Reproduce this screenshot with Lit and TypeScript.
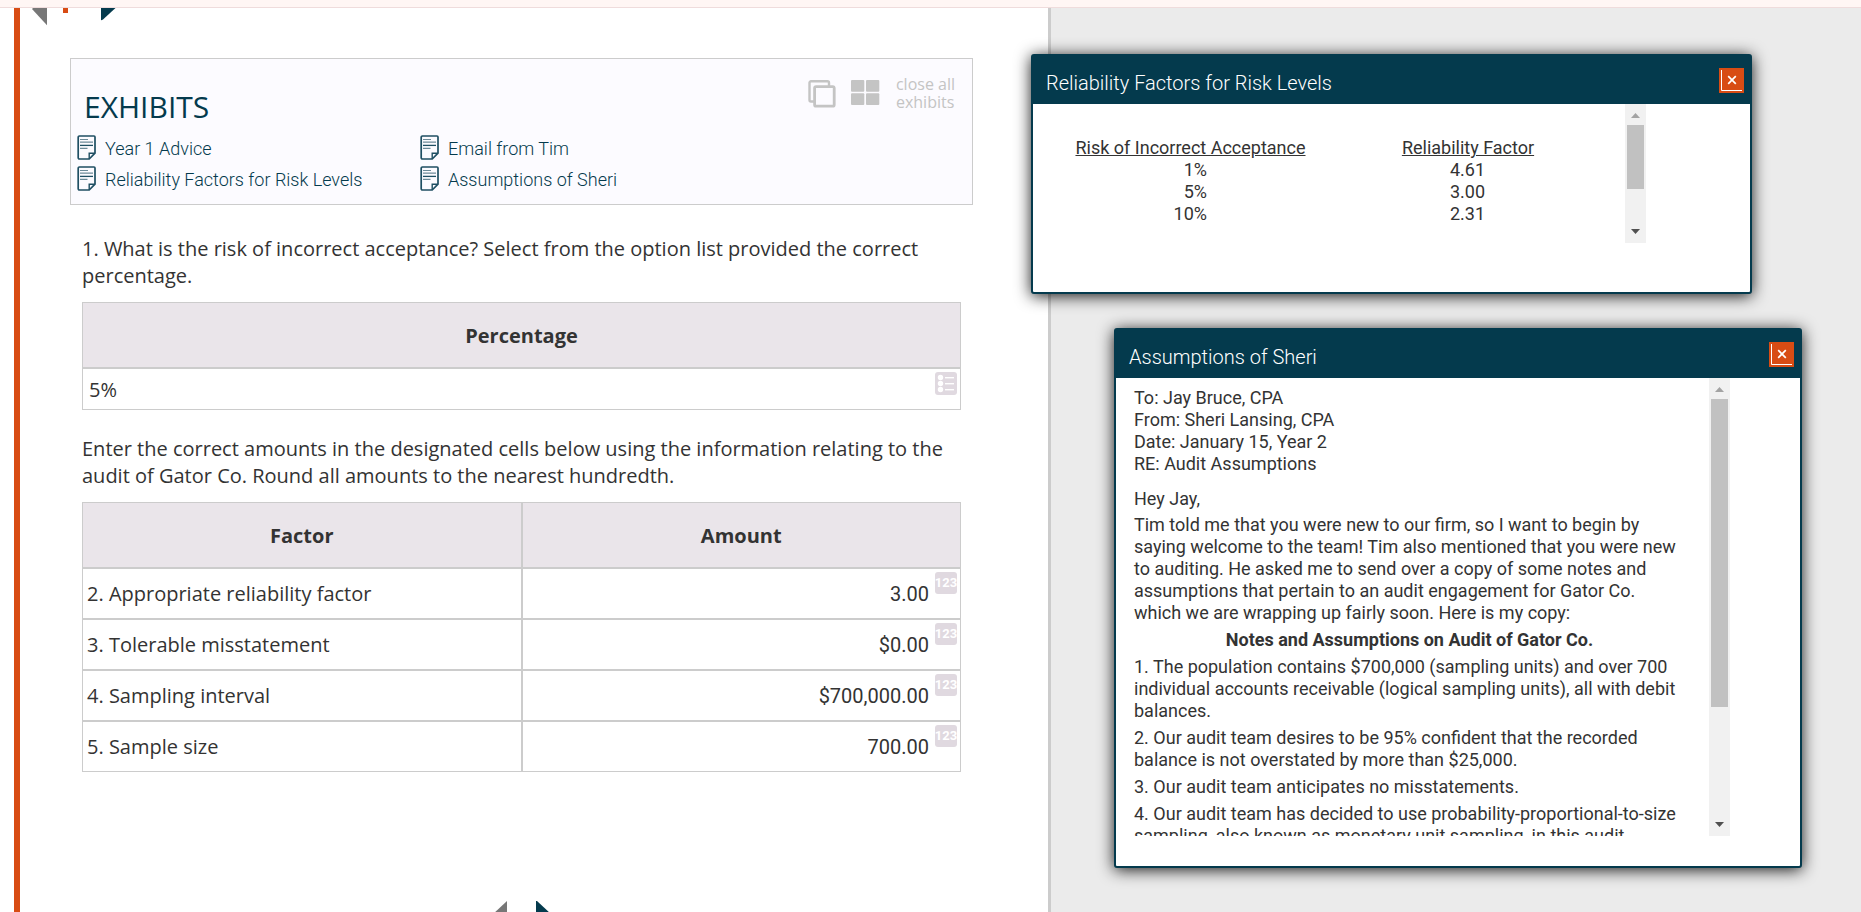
import { LitElement, html, css, svg } from "lit";
import { customElement, property } from "lit/decorators.js";

const docIcon = svg`<svg class="doc" width="20" height="25" viewBox="0 0 20 25" fill="none" aria-hidden="true">
  <path d="M2.4 1H17a1 1 0 0 1 1 1V18.2L12.2 24H2.4A1.2 1.2 0 0 1 1.2 22.8V2.2A1.2 1.2 0 0 1 2.4 1Z" stroke="#1f4f63" stroke-width="1.7"/>
  <path d="M12.2 24V18.2H18" stroke="#1f4f63" stroke-width="1.4"/>
  <path d="M3 4.5H11M3 7.2H16M3 13.4H10.5" stroke="#6d8b99" stroke-width="1.2"/>
  <path d="M3 10.4H16" stroke="#1f4f63" stroke-width="1.3"/>
</svg>`;

@customElement("exhibit-window")
export class ExhibitWindow extends LitElement {
  @property() heading = "";

  static styles = css`
    :host {
      box-sizing: border-box;
      display: flex;
      flex-direction: column;
      border: 2px solid #043a4d;
      border-radius: 3px;
      background: #fff;
      box-shadow: 0 2px 16px rgba(0, 0, 0, 0.9);
      font-family: Roboto, sans-serif;
    }
    .bar {
      display: flex;
      align-items: center;
      justify-content: space-between;
      height: 48px;
      padding: 0 6px 0 13px;
      background: #043a4d;
    }
    .title {
      margin: 0;
      padding-top: 6px;
      color: #fff;
      font-size: 20px;
      line-height: 24px;
      font-weight: 300;
    }
    .close {
      box-sizing: border-box;
      width: 25px;
      height: 25px;
      margin: 0 0 0 12px;
      padding: 0;
      border: 0;
      background: #d84c14;
    }
    .close svg {
      display: block;
    }
    .body {
      display: flex;
      flex: 1;
      min-height: 0;
    }
    .content {
      flex: 1;
      min-width: 0;
      overflow: hidden;
    }
  `;

  render() {
    return html`
      <header class="bar">
        <h2 class="title">${this.heading}</h2>
        <button class="close" aria-label="Close ${this.heading}">
          <svg width="25" height="25" viewBox="0 0 25 25" fill="none" stroke="#fff">
            <path d="M2.5 2V22.5H23" />
            <path d="M9.2 8.2L16.8 15.8M16.8 8.2L9.2 15.8" stroke-width="1.7" />
          </svg>
        </button>
      </header>
      <div class="body">
        <div class="content"><slot></slot></div>
        <slot name="scroll"></slot>
      </div>
    `;
  }
}

@customElement("scroll-rail")
export class ScrollRail extends LitElement {
  @property({ type: Number }) thumb = 50;

  static styles = css`
    :host {
      display: flex;
      flex-direction: column;
      flex: none;
      width: 21px;
      background: #f1f1f1;
    }
    .step {
      width: 21px;
      height: 21px;
      padding: 0;
      border: 0;
      background: transparent;
    }
    .step svg {
      display: block;
    }
    .track {
      flex: 1;
      padding: 0 2px;
    }
    .thumb {
      background: #c1c1c1;
    }
  `;

  render() {
    return html`
      <button class="step" aria-label="Scroll up">
        <svg width="21" height="21" viewBox="0 0 21 21"><path d="M6 14L10.5 9L15 14Z" fill="#a3a3a3" /></svg>
      </button>
      <div class="track"><div class="thumb" style="height:${this.thumb}%"></div></div>
      <button class="step" aria-label="Scroll down">
        <svg width="21" height="21" viewBox="0 0 21 21"><path d="M6 7L10.5 12L15 7Z" fill="#505050" /></svg>
      </button>
    `;
  }
}

@customElement("app-root")
export class AppRoot extends LitElement {
  static styles = css`
    :host {
      display: block;
      color: #333;
      font-family: "Open Sans", sans-serif;
      font-size: 20px;
      line-height: 27px;
    }
    .page {
      position: relative;
      display: flex;
      flex-direction: column;
      height: 100vh;
      overflow: hidden;
      background: #ebebeb;
    }
    .notice {
      flex: none;
      height: 7px;
      background: #fff6f4;
      border-bottom: 1px solid #efdcdc;
    }
    .split {
      display: grid;
      grid-template-columns: minmax(0, 1fr) 810px;
      flex: 1;
      min-height: 0;
    }
    .sheet {
      padding-left: 14px;
      background: #fff;
      border-right: 3px solid #ccc;
    }
    .inner {
      box-sizing: border-box;
      display: flex;
      flex-direction: column;
      height: 100%;
      padding: 0 75px 0 50px;
      border-left: 6px solid #d84c14;
    }
    .pager {
      display: flex;
      align-items: flex-start;
      height: 50px;
      margin-left: -38px;
    }
    .pager.foot {
      gap: 29px;
      height: 11px;
      margin: auto 0 0 422px;
    }
    .arrow {
      padding: 0;
      border: 0;
      background: transparent;
    }
    .arrow svg,
    .mark {
      display: block;
    }
    .mark {
      width: 5px;
      height: 5px;
      margin: 0 33px 0 16px;
      background: #d84c14;
    }
    .exhibits {
      box-sizing: border-box;
      height: 147px;
      padding: 0 7px 0 6px;
      background: #fcfbff;
      border: 1px solid #ccc;
    }
    .exhead {
      display: flex;
      justify-content: space-between;
      height: 76px;
      padding: 0 10px 0 7px;
    }
    .exhead h1 {
      margin: 28px 0 0;
      color: #043a4d;
      font-size: 30px;
      line-height: 40px;
      font-weight: 400;
    }
    .tools {
      display: flex;
      align-items: flex-start;
      padding-top: 16px;
    }
    .tool {
      padding: 0;
      border: 0;
      background: transparent;
      color: #c4c4c4;
      font: 400 16px/18px "Open Sans", sans-serif;
      text-align: left;
    }
    .tool svg {
      display: block;
      margin: 5px 15px 0 0;
    }
    .links {
      display: grid;
      grid-template-columns: 343px 1fr;
      row-gap: 6px;
      margin: 0;
      padding: 0;
      list-style: none;
    }
    .links a {
      display: flex;
      gap: 8px;
      height: 25px;
      color: #043a4d;
      font: 300 18px/27px Roboto, sans-serif;
      text-decoration: none;
    }
    .questions {
      padding: 30px 12px 0;
    }
    .ask {
      margin: 0 0 13px;
    }
    .grid {
      width: 100%;
      margin-bottom: 25px;
      border-collapse: separate;
      border-spacing: 0;
      border: 0;
      table-layout: fixed;
    }
    .grid th,
    .grid td {
      box-sizing: border-box;
      border: 1px solid #ccc;
    }
    .grid thead th {
      height: 66px;
      padding: 0;
      background: #eae5ea;
      font-weight: 700;
    }
    .grid tbody th {
      padding: 0 4px;
      font-weight: 400;
      text-align: left;
    }
    .grid tbody th,
    .amount {
      height: 51px;
    }
    .grid td {
      padding: 0;
    }
    .field {
      display: flex;
      align-items: stretch;
      padding: 0 3px 0 0;
      height: 49px;
    }
    .field.short {
      height: 40px;
    }
    .field input,
    .field select {
      flex: 1;
      min-width: 0;
      margin: 0;
      padding: 2px 6px 0;
      border: 0;
      background: transparent;
      color: #333;
      font: 400 20px/27px Roboto, sans-serif;
      text-align: right;
      appearance: none;
    }
    .field select {
      padding-top: 0;
      font-family: "Open Sans", sans-serif;
      text-align: left;
    }
    .field svg {
      flex: none;
      margin-top: 3px;
    }
    .badge {
      font: 700 13px Roboto, sans-serif;
    }
    .win {
      position: absolute;
    }
    .factors-win {
      top: 54px;
      left: 1031px;
      width: 721px;
      height: 240px;
    }
    .notes-win {
      top: 328px;
      left: 1114px;
      width: 688px;
      height: 540px;
    }
    .rail {
      margin-right: 104px;
      margin-bottom: 49px;
    }
    .notes-win .rail {
      margin-right: 70px;
      margin-bottom: 30px;
    }
    .factors {
      width: 555px;
      margin: 33px 0 0 15px;
      border-collapse: collapse;
      table-layout: fixed;
      font: 400 18px/22px Roboto, sans-serif;
    }
    .factors th {
      padding: 0;
      font-weight: 400;
      text-decoration: underline;
      white-space: nowrap;
    }
    .factors td {
      padding: 0;
    }
    .factors .risk {
      width: 285px;
    }
    .factors td.risk {
      box-sizing: border-box;
      padding-right: 126px;
      text-align: right;
    }
    .factors td.factor {
      padding-left: 117px;
    }
    .notes {
      height: 458px;
      overflow: hidden;
      box-sizing: border-box;
      padding: 9px 24px 0 18px;
      font: 400 18px/22px Roboto, sans-serif;
    }
    .notes p,
    .notes h3 {
      margin: 0 0 5px;
      font-size: 18px;
    }
    .notes h3 {
      text-align: center;
    }
    .notes .meta {
      margin-bottom: 13px;
    }
    .notes .greeting {
      margin-bottom: 4px;
    }
  `;

  private rows: [string, string][] = [
    ["2. Appropriate reliability factor", "3.00"],
    ["3. Tolerable misstatement", "$0.00"],
    ["4. Sampling interval", "$700,000.00"],
    ["5. Sample size", "700.00"],
  ];

  private exhibits = ["Year 1 Advice", "Email from Tim", "Reliability Factors for Risk Levels", "Assumptions of Sheri"];

  private factors: [string, string][] = [
    ["1%", "4.61"],
    ["5%", "3.00"],
    ["10%", "2.31"],
  ];

  render() {
    return html`
      <div class="page">
        <div class="notice"></div>
        <div class="split">
          <main class="sheet">
            <div class="inner">
              <nav class="pager" aria-label="Question">
                <button class="arrow" aria-label="Previous">
                  <svg width="15" height="18" viewBox="0 0 15 18"><path d="M1 0H15V17.2L0 1Z" fill="#777" /></svg>
                </button>
                <span class="mark"></span>
                <button class="arrow" aria-label="Next">
                  <svg width="15" height="13" viewBox="0 0 15 13"><path d="M0 0H14.5L2 11.5Q1 12.2 0 12.2Z" fill="#043a4d" /></svg>
                </button>
              </nav>
              <section class="exhibits">
                <div class="exhead">
                  <h1>EXHIBITS</h1>
                  <div class="tools">
                    <button class="tool" aria-label="Cascade">
                      <svg width="28" height="28" viewBox="0 0 28 28" fill="none" stroke="#c4c4c4">
                        <path d="M7 21.5H3A1.5 1.5 0 0 1 1.5 20V2.8A1.5 1.5 0 0 1 3 1.3H19.5A1.5 1.5 0 0 1 21 2.8V6" stroke-width="2.4" />
                        <rect x="6.6" y="6.6" width="19.6" height="19.6" rx="1.5" stroke-width="2.8" />
                      </svg>
                    </button>
                    <button class="tool" aria-label="Tile">
                      <svg width="30" height="26" viewBox="0 0 30 26" fill="#c4c4c4">
                        <rect x="0" y="0" width="13.3" height="11.8" rx="1" />
                        <rect x="15" y="0" width="13.3" height="11.8" rx="1" />
                        <rect x="0" y="13.3" width="13.3" height="11.8" rx="1" />
                        <rect x="15" y="13.3" width="13.3" height="11.8" rx="1" />
                      </svg>
                    </button>
                    <button class="tool">close all<br />exhibits</button>
                  </div>
                </div>
                <ul class="links">
                  ${this.exhibits.map((name) => html`<li><a href="#">${docIcon}<span>${name}</span></a></li>`)}
                </ul>
              </section>
              <section class="questions">
                <p class="ask" id="q1">
                  1. What is the risk of incorrect acceptance? Select from the option list provided the correct percentage.
                </p>
                <table class="grid">
                  <thead>
                    <tr><th scope="col">Percentage</th></tr>
                  </thead>
                  <tbody>
                    <tr>
                      <td>
                        <div class="field short">
                          <select aria-labelledby="q1"><option>5%</option></select>
                          <svg width="22" height="23" viewBox="0 0 22 23" aria-hidden="true">
                            <rect width="22" height="23" rx="3" fill="#e0d9e0" />
                            <g fill="#fff">
                              <circle cx="5.5" cy="5.5" r="2.7" /><circle cx="5.5" cy="11.5" r="2.7" /><circle cx="5.5" cy="17.5" r="2.7" />
                              <rect x="10" y="5" width="9" height="1.4" /><rect x="10" y="11" width="9" height="1.4" /><rect x="10" y="17" width="9" height="1.4" />
                            </g>
                          </svg>
                        </div>
                      </td>
                    </tr>
                  </tbody>
                </table>
                <p class="ask">
                  Enter the correct amounts in the designated cells below using the information relating to the audit of
                  Gator Co. Round all amounts to the nearest hundredth.
                </p>
                <table class="grid">
                  <thead>
                    <tr><th scope="col">Factor</th><th scope="col">Amount</th></tr>
                  </thead>
                  <tbody>
                    ${this.rows.map(
                      ([label, value], i) => html`<tr>
                        <th scope="row"><label for="amount-${i}">${label}</label></th>
                        <td class="amount">
                          <div class="field">
                            <input id="amount-${i}" type="text" .value=${value} />
                            <svg width="22" height="22" viewBox="0 0 22 22" aria-hidden="true">
                              <rect width="22" height="22" rx="3" fill="#e0d9e0" />
                              <text class="badge" x="11" y="15" text-anchor="middle" fill="#fff">123</text>
                            </svg>
                          </div>
                        </td>
                      </tr>`,
                    )}
                  </tbody>
                </table>
              </section>
              <nav class="pager foot" aria-label="Question, bottom">
                <button class="arrow" aria-label="Previous">
                  <svg width="15" height="28" viewBox="0 0 15 28"><path d="M15 0V28L0 14Z" fill="#777" /></svg>
                </button>
                <button class="arrow" aria-label="Next">
                  <svg width="15" height="28" viewBox="0 0 15 28"><path d="M0 0H1L15 13L0 28Z" fill="#043a4d" /></svg>
                </button>
              </nav>
            </div>
          </main>
        </div>

        <exhibit-window class="win factors-win" heading="Reliability Factors for Risk Levels">
          <table class="factors">
            <thead>
              <tr><th class="risk" scope="col">Risk of Incorrect Acceptance</th><th class="factor" scope="col">Reliability Factor</th></tr>
            </thead>
            <tbody>
              ${this.factors.map(([risk, factor]) => html`<tr><td class="risk">${risk}</td><td class="factor">${factor}</td></tr>`)}
            </tbody>
          </table>
          <scroll-rail class="rail" slot="scroll" thumb="66"></scroll-rail>
        </exhibit-window>

        <exhibit-window class="win notes-win" heading="Assumptions of Sheri">
          <div class="notes">
            <p class="meta">To: Jay Bruce, CPA<br />From: Sheri Lansing, CPA<br />Date: January 15, Year 2<br />RE: Audit Assumptions</p>
            <p class="greeting">Hey Jay,</p>
            <p>
              Tim told me that you were new to our firm, so I want to begin by saying welcome to the team! Tim also
              mentioned that you were new to auditing. He asked me to send over a copy of some notes and assumptions that
              pertain to an audit engagement for Gator Co. which we are wrapping up fairly soon. Here is my copy:
            </p>
            <h3>Notes and Assumptions on Audit of Gator Co.</h3>
            <p>
              1. The population contains $700,000 (sampling units) and over 700 individual accounts receivable (logical
              sampling units), all with debit balances.
            </p>
            <p>2. Our audit team desires to be 95% confident that the recorded balance is not overstated by more than $25,000.</p>
            <p>3. Our audit team anticipates no misstatements.</p>
            <p>4. Our audit team has decided to use probability-proportional-to-size sampling, also known as monetary unit sampling, in this audit.</p>
          </div>
          <scroll-rail class="rail" slot="scroll" thumb="74"></scroll-rail>
        </exhibit-window>
      </div>
    `;
  }
}
